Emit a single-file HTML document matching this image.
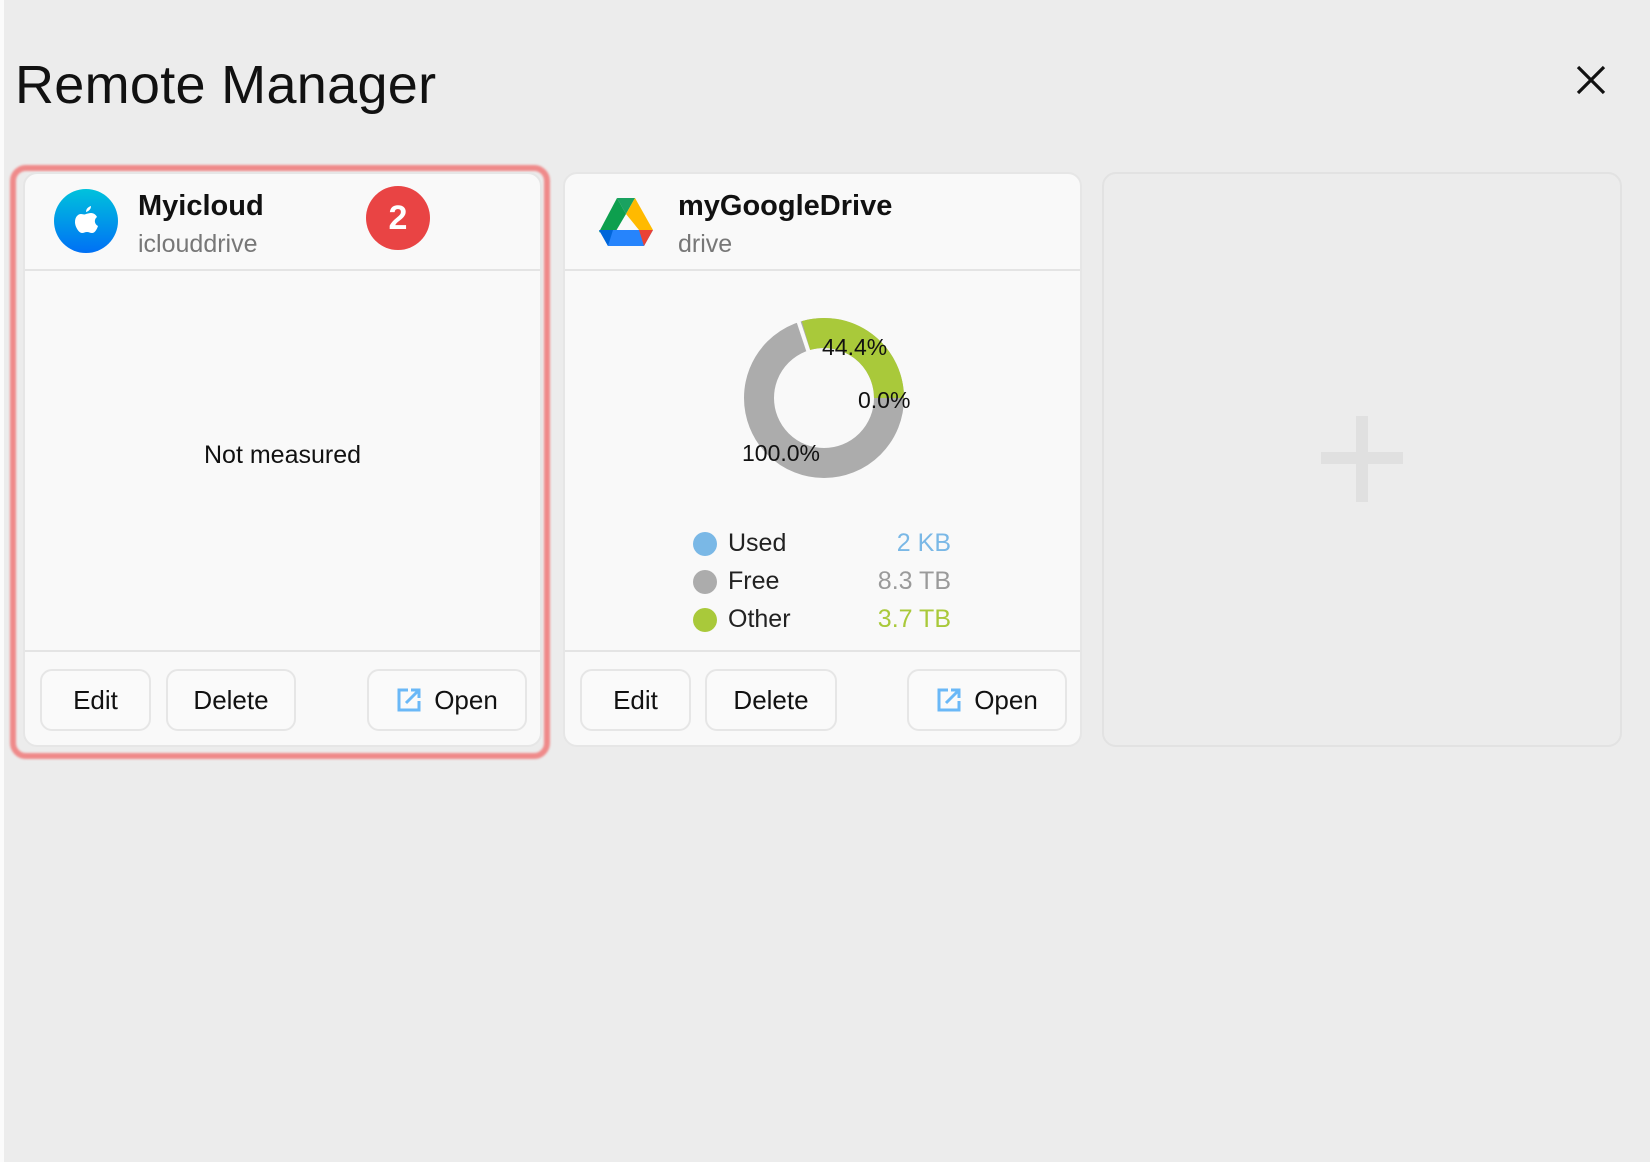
<!DOCTYPE html>
<html><head><meta charset="utf-8"><style>
*{box-sizing:border-box;margin:0;padding:0}
body{width:1650px;height:1162px;background:#ececec;font-family:"Liberation Sans",sans-serif;position:relative;overflow:hidden}
.abs{position:absolute}
.title{left:15px;top:54px;font-size:54px;color:#111;letter-spacing:0.3px}
.card{position:absolute;top:172px;height:575px;background:#f9f9f9;border:2px solid #e6e6e6;border-radius:14px;overflow:hidden}
.hdr{position:absolute;left:0;right:0;top:0;height:97px;border-bottom:2px solid #e4e4e4}
.ftr{position:absolute;left:0;right:0;bottom:0;height:95px;border-top:2px solid #e4e4e4}
.name{position:absolute;font-weight:bold;font-size:29px;color:#111;top:16px}
.sub{position:absolute;font-size:25px;color:#777;top:56px}
.btn{position:absolute;top:17px;height:62px;border:2px solid #e6e6e6;border-radius:12px;background:#fafafa;font-size:26px;color:#111;display:flex;align-items:center;justify-content:center;gap:12px;font-weight:500}
.lg{position:absolute;font-size:25px;color:#222}
.dot{position:absolute;width:24px;height:24px;border-radius:50%}
.val{position:absolute;font-size:25px;text-align:right;width:150px}
.pl{font-size:23px;color:#111;position:absolute}
</style></head><body>
<div class="abs" style="left:0;top:0;width:4px;height:1162px;background:#fbfbfb"></div>
<div class="abs title">Remote Manager</div>
<svg class="abs" style="left:1574px;top:63px" width="34" height="34" viewBox="0 0 34 34"><path d="M4 4L30 30M30 4L4 30" stroke="#111" stroke-width="3.2"/></svg>

<div class="abs" style="left:10px;top:165px;width:540px;height:594px;border:6px solid #ef8a8a;border-radius:16px;filter:blur(1px)"></div>

<div class="card" style="left:23px;width:519px">
 <div class="hdr">
  <div class="abs" style="left:29px;top:15px;width:64px;height:64px;border-radius:50%;background:linear-gradient(#00c2dc,#0070f5)"></div>
  <svg class="abs" style="left:45px;top:29px" width="32" height="36" viewBox="0 0 32 36"><path d="M16 11c2-0.5 3-1 5-1 3 0 5 2 6 4-3 2-3 7 1 9-1 3-3 7-6 7-2 0-3-1-5-1s-3 1-5 1c-3 0-7-6-7-11 0-5 3-8 6-8 2 0 3 1 5 0z" fill="#fff"/><path d="M16 9c0-3 2-5 5-6 0 3-2 5-5 6z" fill="#fff"/></svg>
  <div class="name" style="left:113px">Myicloud</div>
  <div class="sub" style="left:113px">iclouddrive</div>
  <div class="abs" style="left:341px;top:12px;width:64px;height:64px;border-radius:50%;background:#e94444;color:#fff;font-weight:bold;font-size:34px;text-align:center;line-height:64px">2</div>
 </div>
 <div class="abs" style="left:0;width:100%;top:267px;text-align:center;font-size:25px;color:#111">Not measured</div>
 <div class="ftr">
  <div class="btn" style="left:15px;width:111px">Edit</div>
  <div class="btn" style="left:141px;width:130px">Delete</div>
  <div class="btn" style="left:342px;width:160px"><svg width="26" height="26" viewBox="0 0 26 26"><path d="M12 3H3v20h20v-9" stroke="#6ab8f7" stroke-width="3" fill="none"/><path d="M10 16L22 4M15 3h8v8" stroke="#6ab8f7" stroke-width="3" fill="none"/></svg>Open</div>
 </div>
</div>

<div class="card" style="left:563px;width:519px">
 <div class="hdr">
  <svg class="abs" style="left:34px;top:22px" width="54" height="50" viewBox="0 0 54 50"><polygon points="18,2 36,2 27,18 18,2" fill="#1aa260"/><polygon points="18,2 27,18 14,40 0,36" fill="#0d9f4e"/><polygon points="36,2 54,34 40,34 27,18" fill="#ffba00"/><polygon points="0,34 9,50 45,50 54,34" fill="#2684fc"/><polygon points="40,34 54,34 45,50" fill="#ea4335"/><polygon points="0,34 14,34 9,50" fill="#0066da"/></svg>
  <div class="name" style="left:113px">myGoogleDrive</div>
  <div class="sub" style="left:113px">drive</div>
 </div>
 <svg class="abs" style="left:0;top:0" width="519" height="480">
  <circle cx="259" cy="224" r="65" fill="none" stroke="#acacac" stroke-width="30"/>
  <path d="M241 161.5 A65 65 0 0 1 324 224" fill="none" stroke="#a9c93a" stroke-width="30"/>
  <line x1="259" y1="224" x2="231" y2="140" stroke="#f9f9f9" stroke-width="4"/>
 </svg>
 <div class="pl" style="left:257px;top:160px">44.4%</div>
 <div class="pl" style="left:293px;top:213px">0.0%</div>
 <div class="pl" style="left:177px;top:266px">100.0%</div>
 <div class="dot" style="left:128px;top:358px;background:#7ab8e6"></div>
 <div class="dot" style="left:128px;top:396px;background:#acacac"></div>
 <div class="dot" style="left:128px;top:434px;background:#a9c93a"></div>
 <div class="lg" style="left:163px;top:355px">Used</div>
 <div class="lg" style="left:163px;top:393px">Free</div>
 <div class="lg" style="left:163px;top:431px">Other</div>
 <div class="val" style="left:236px;top:355px;color:#7ab8e6">2 KB</div>
 <div class="val" style="left:236px;top:393px;color:#9a9a9a">8.3 TB</div>
 <div class="val" style="left:236px;top:431px;color:#a9c93a">3.7 TB</div>
 <div class="ftr">
  <div class="btn" style="left:15px;width:111px">Edit</div>
  <div class="btn" style="left:140px;width:132px">Delete</div>
  <div class="btn" style="left:342px;width:160px"><svg width="26" height="26" viewBox="0 0 26 26"><path d="M12 3H3v20h20v-9" stroke="#6ab8f7" stroke-width="3" fill="none"/><path d="M10 16L22 4M15 3h8v8" stroke="#6ab8f7" stroke-width="3" fill="none"/></svg>Open</div>
 </div>
</div>

<div class="card" style="left:1102px;width:520px;background:#ececec;border-color:#e2e2e2">
 <div class="abs" style="left:252px;top:242px;width:12px;height:86px;background:#e0e0e0"></div>
 <div class="abs" style="left:217px;top:278px;width:82px;height:12px;background:#e0e0e0"></div>
</div>
</body></html>
